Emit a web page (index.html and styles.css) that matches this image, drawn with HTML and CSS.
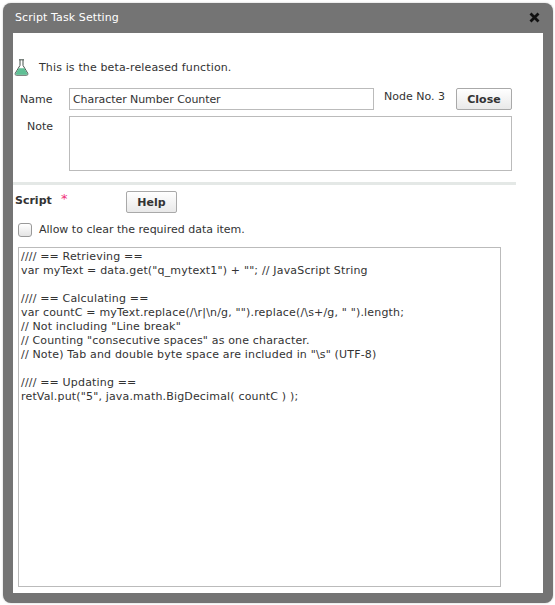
FILE: index.html
```html
<!DOCTYPE html>
<html lang="en">
<head>
<meta charset="utf-8">
<title>Script Task Setting</title>
<link rel="stylesheet" href="styles.css">
</head>
<body>
<div class="dialog">
  <header class="titlebar">
    <span class="title">Script Task Setting</span>
    <svg class="close-x" width="11" height="11" viewBox="0 0 11 11"><path d="M1.500 1.500 9.500 9.500M9.500 1.500 1.500 9.500" fill="none" stroke="#111" stroke-width="2.800"/></svg>
  </header>
  <main class="content">
    <div class="beta">
      <svg class="flask" width="15" height="17" viewBox="0 0 15 17">
        <path d="M5 .8h5M6 .8v5.600L1.300 14.200c-.6 1.200 0 2 1.200 2h10c1.200 0 1.800-.8 1.200-2L9 6.400V.8" fill="#fff" stroke="#46524c" stroke-width="1"/>
        <path d="M4.700 9.200h5.600l3 5.200c.4.800 0 1.300-.9 1.300H2.600c-.9 0-1.300-.5-.9-1.300z" fill="#5fbf95"/>
      </svg>
      <span class="beta-text">This is the beta-released function.</span>
    </div>
    <div class="name-row">
      <label class="field-label">Name</label>
      <div class="input name-input">Character Number Counter</div>
      <span class="node">Node No. 3</span>
      <button class="btn close-btn" type="button">Close</button>
    </div>
    <div class="note-row">
      <label class="field-label note-label">Note</label>
      <div class="input note-input"></div>
    </div>
    <hr class="divider">
    <div class="script-row">
      <span class="script-label">Script</span>
      <span class="required">*</span>
      <button class="btn help-btn" type="button">Help</button>
    </div>
    <div class="check-row">
      <span class="checkbox"></span>
      <span class="check-text">Allow to clear the required data item.</span>
    </div>
    <pre class="code">//// == Retrieving ==
var myText = data.get("q_mytext1") + ""; // JavaScript String

//// == Calculating ==
var countC = myText.replace(/\r|\n/g, "").replace(/\s+/g, " ").length;
// Not including "Line break"
// Counting "consecutive spaces" as one character.
// Note) Tab and double byte space are included in "\s" (UTF-8)

//// == Updating ==
retVal.put("5", java.math.BigDecimal( countC ) );</pre>
  </main>
</div>
</body>
</html>
```
FILE: styles.css
```css
* { box-sizing: border-box; }
html, body { margin: 0; height: 100%; background: #fff; }
body {
  padding: 3px 2px 2px 3px;
  font-family: "DejaVu Sans", Verdana, sans-serif;
  font-size: 11px;
  color: #333;
}
.dialog {
  width: 550px;
  height: 600px;
  background: #747474;
  border-radius: 8px;
  box-shadow: 0 0 2px rgba(0, 0, 0, 0.25);
  padding: 0 10px 10px 10px;
  display: flex;
  flex-direction: column;
}
.titlebar {
  height: 30px;
  flex: none;
  display: flex;
  align-items: center;
  justify-content: space-between;
  padding: 0 2px;
  color: #fff;
}
.title { position: relative; top: -1px; letter-spacing: 0.1px; }
.close-x { position: relative; top: -1px; left: -1px; }
.content {
  flex: 1;
  background: #fff;
  padding: 0 0 0 1px;
  display: flex;
  flex-direction: column;
  align-items: flex-start;
}
.beta {
  margin-top: 24px;
  height: 20px;
  display: flex;
  align-items: center;
  gap: 10px;
}
.flask { position: relative; top: 0.5px; }
.beta-text { letter-spacing: 0.14px; }
.name-row {
  margin-top: 11px;
  display: flex;
  align-items: flex-start;
}
.name-row .field-label { width: 55px; padding: 5px 0 0 6px; }
.input { border: 1px solid #bbb; background: #fff; }
.name-input { width: 305px; height: 22px; padding: 4px 0 0 3px; line-height: 14px; letter-spacing: -0.08px; }
.node { margin-left: 10px; padding-top: 2px; width: 72px; }
.btn {
  font: bold 11px "DejaVu Sans", Verdana, sans-serif;
  color: #333;
  border: 1px solid #a9a9a9;
  border-radius: 2px;
  background: linear-gradient(#fff, #e9e9e9);
  padding: 0;
}
.close-btn { width: 56px; height: 22px; }
.note-row { margin-top: 6px; display: flex; }
.note-row .note-label { width: 55px; padding: 4px 0 0 13px; }
.note-input { width: 443px; height: 55px; }
.divider {
  width: 503px;
  height: 3px;
  margin: 11px 0 0 -1px;
  border: 0;
  background: #e4e8e6;
}
.script-row { margin-top: 6px; height: 22px; display: flex; align-items: flex-start; }
.script-label { font-weight: bold; width: 47px; padding: 3px 0 0 1px; }
.required { color: #f0307a; width: 65px; font-size: 13px; line-height: 15px; }
.help-btn { width: 51px; height: 22px; }
.check-row { margin-top: 10px; display: flex; align-items: center; gap: 7px; padding-left: 4px; height: 14px; }
.checkbox {
  width: 14px;
  height: 14px;
  border: 1px solid #999;
  border-radius: 3px;
  background: linear-gradient(#fff, #e4e4e4);
}
.check-text { position: relative; top: -1px; }
.code {
  margin: 10px 0 0 4px;
  width: 483px;
  height: 340px;
  border: 1px solid #bbb;
  padding: 2px;
  font: 11px/14px "DejaVu Sans", Verdana, sans-serif;
  letter-spacing: 0.17px;
  color: #333;
  background: #fff;
  overflow: hidden;
}
```
